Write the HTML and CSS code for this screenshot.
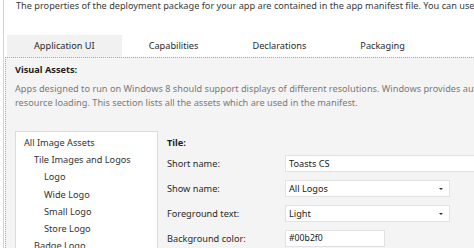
FILE: index.html
```html
<!DOCTYPE html>
<html lang="en">
  <head>
    <meta charset="UTF-8" />
    <meta name="viewport" content="width=device-width, initial-scale=1.0" />
    <title>Package manifest</title>
    <link rel="stylesheet" href="styles.css">
  </head>

  <body>
    <div class="page">
      <p class="intro">The properties of the deployment package for your app are contained in the app manifest file. You can use the Manifest Designer to set or modify one or more of the properties.</p>

      <div class="tabs">
        <span class="tab active">Application UI</span>
        <span class="tab">Capabilities</span>
        <span class="tab">Declarations</span>
        <span class="tab">Packaging</span>
      </div>

      <div class="panel">
        <h2>Visual Assets:</h2>
        <p class="desc">Apps designed to run on Windows 8 should support displays of different resolutions. Windows provides automatic<br>resource loading. This section lists all the assets which are used in the manifest.</p>

        <div class="assets">
          <ul class="tree">
            <li class="lvl0">All Image Assets</li>
            <li class="lvl1">Tile Images and Logos</li>
            <li class="lvl2">Logo</li>
            <li class="lvl2">Wide Logo</li>
            <li class="lvl2">Small Logo</li>
            <li class="lvl2">Store Logo</li>
            <li class="lvl1">Badge Logo</li>
          </ul>

          <div class="tile">
            <h3>Tile:</h3>
            <div class="fields">
              <label>Short name:</label>
              <div class="field wide">Toasts CS</div>
              <label>Show name:</label>
              <div class="field select">All Logos<span class="arrow"></span></div>
              <label>Foreground text:</label>
              <div class="field select">Light<span class="arrow"></span></div>
              <label>Background color:</label>
              <div class="field color">#00b2f0</div>
            </div>
          </div>
        </div>
      </div>
    </div>
  </body>
</html>
```

FILE: styles.css
```css
body {
  font-family: "Noto Sans", sans-serif;
  font-size: 9.2px;
  margin: 0;
  padding: 0;
  background-color: #fff;
  color: #333;
  overflow: hidden;
  height: 248px;
}

.page {
  margin-left: 3px;
  border-left: 1px solid #d4d4d4;
  height: 248px;
  white-space: nowrap;
  overflow: hidden;
}

.intro {
  margin: 0;
  padding-left: 12px;
  line-height: 12px;
  color: #3a3a3a;
  overflow: hidden;
}

.tabs {
  display: flex;
  margin-top: 23px;
  padding-left: 3px;
  height: 22px;
}

.tab {
  padding: 0 27px;
  line-height: 22px;
  color: #2a2a2a;
}

.tab.active {
  background-color: #f1f1f1;
}

.panel {
  margin-left: 1px;
  border-top: 1px dotted #a8a8a8;
  border-left: 1px dotted #a8a8a8;
  background-color: #f4f4f4;
  padding: 6px 0 0 9px;
  height: 200px;
  overflow: hidden;
}

h2 {
  margin: 0;
  font-size: 9.2px;
  font-weight: bold;
  line-height: 12px;
  color: #1e1e1e;
}

.desc {
  margin: 6px 0 0;
  line-height: 14px;
  color: #7a7a7a;
}

.assets {
  display: flex;
  margin-top: 21px;
}

.tree {
  flex: none;
  list-style: none;
  margin: 0;
  padding: 2px 0 0;
  width: 141px;
  height: 130px;
  background-color: #fff;
  border: 1px solid #dcdcdc;
  border-bottom: none;
}

.tree li {
  line-height: 17.2px;
  color: #333;
}

.lvl0 {
  padding-left: 8px;
}

.lvl1 {
  padding-left: 18px;
}

.lvl2 {
  padding-left: 28px;
}

.tile {
  margin-left: 9px;
  flex: none;
}

h3 {
  margin: 0;
  padding-top: 6px;
  font-size: 9.2px;
  font-weight: bold;
  line-height: 12px;
  color: #1e1e1e;
}

.fields {
  display: grid;
  grid-template-columns: 118px auto;
  row-gap: 8px;
  margin-top: 6px;
  align-items: center;
}

.fields label {
  color: #2a2a2a;
}

.field {
  position: relative;
  height: 15px;
  line-height: 15px;
  padding-left: 3px;
  background-color: #fff;
  border: 1px solid #e2e2e2;
  color: #222;
}

.field.wide {
  width: 220px;
}

.field.select {
  width: 160px;
}

.field.color {
  width: 95px;
  font-size: 8.7px;
}

.arrow {
  position: absolute;
  right: 6px;
  top: 7px;
  border-left: 2px solid transparent;
  border-right: 2px solid transparent;
  border-top: 2px solid #333;
}
```
